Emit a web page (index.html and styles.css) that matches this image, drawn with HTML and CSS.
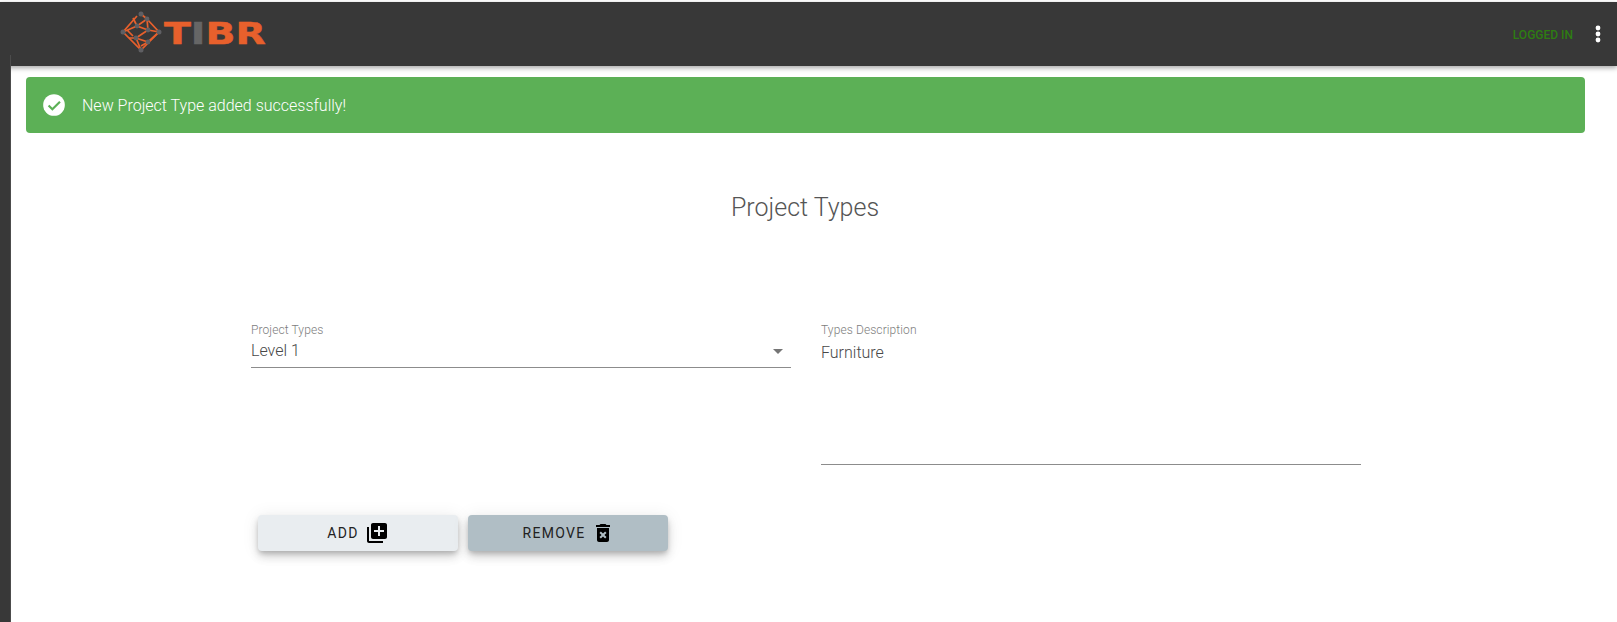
FILE: index.html
```html
<!DOCTYPE html>
<html lang="en">
<head>
<meta charset="utf-8">
<title>Project Types</title>
<link rel="stylesheet" href="styles.css">
</head>
<body>
<header class="topbar">
  <div class="brand">
    <svg class="brand-mark" viewBox="0 0 44 44" width="44" height="44" aria-hidden="true">
      <g fill="none" stroke="#e8602c" stroke-width="1.7">
        <path d="M18 6 L4 22 L22 40 L40 22 L28 9"/>
        <path d="M18 16 L28 9 L29 20 L17 28 L29 32 L40 22 L29 20"/>
        <path d="M14 8 L18 16 L29 20 M4 22 L18 16 M22 4 L28 9 M17 28 L10 28 M17 28 L22 40 M29 32 L22 36 M14 26 L8 20"/>
      </g>
      <g fill="#5f5f63">
        <circle cx="22" cy="4" r="2.5"/><circle cx="40" cy="22" r="2.5"/><circle cx="22" cy="40" r="2.5"/><circle cx="4" cy="22" r="2.5"/>
        <circle cx="28" cy="9" r="2.4"/><circle cx="18" cy="16" r="2.4"/><circle cx="29" cy="20" r="2.4"/><circle cx="17" cy="28" r="2.4"/><circle cx="29" cy="32" r="2.400"/>
      </g>
    </svg>
    <div class="wordmark"><span>T</span><span class="wordmark-i">I</span><span>BR</span></div>
  </div>
  <div class="session">
    <span class="session-label">LOGGED IN</span>
    <svg class="more" viewBox="0 0 6 18" width="6" height="18" aria-hidden="true"><circle cx="3" cy="3" r="2.400"/><circle cx="3" cy="9" r="2.400"/><circle cx="3" cy="15" r="2.400"/></svg>
  </div>
</header>
<div class="shell">
  <aside class="rail"></aside>
  <main class="content">
    <div class="alert">
      <svg class="alert-icon" viewBox="0 0 24 24" width="26" height="26" aria-hidden="true"><path fill="#fff" d="M12 2a10 10 0 1 0 0 20 10 10 0 0 0 0-20z"/><path fill="none" stroke="#5cb056" stroke-width="2" d="M7 12.500l3.500 3.500L17.500 9"/></svg>
      <span>New Project Type added successfully!</span>
    </div>
    <h1 class="title">Project Types</h1>
    <div class="form">
      <div class="field field-select">
        <label>Project Types</label>
        <div class="value">Level 1</div>
        <svg class="caret" viewBox="0 0 10 5" width="10" height="5" aria-hidden="true"><path d="M0 0h10L5 5z"/></svg>
      </div>
      <div class="field field-text">
        <label>Types Description</label>
        <div class="value">Furniture</div>
      </div>
    </div>
    <div class="actions">
      <button class="btn btn-light" type="button">ADD
        <svg viewBox="0 0 24 24" width="24" height="24" aria-hidden="true"><path d="M4 6H2v14c0 1.100.9 2 2 2h14v-2H4V6zm16-4H8c-1.100 0-2 .9-2 2v12c0 1.100.9 2 2 2h12c1.100 0 2-.9 2-2V4c0-1.100-.9-2-2-2zm-1 9h-4v4h-2v-4H9V9h4V5h2v4h4v2z"/></svg>
      </button>
      <button class="btn btn-dark" type="button">REMOVE
        <svg viewBox="0 0 24 24" width="24" height="24" aria-hidden="true"><path d="M6 19c0 1.100.9 2 2 2h8c1.100 0 2-.9 2-2V7H6v12zm2.460-7.120l1.410-1.410L12 12.590l2.120-2.120 1.410 1.410L13.410 14l2.120 2.120-1.410 1.410L12 15.410l-2.120 2.120-1.410-1.410L10.590 14l-2.130-2.120zM15.500 4l-1-1h-5l-1 1H5v2h14V4z"/></svg>
      </button>
    </div>
  </main>
</div>
</body>
</html>
```
FILE: styles.css
```css
* { box-sizing: border-box; }
html, body { margin: 0; height: 622px; overflow: hidden; background: #fff; }
body { font-family: Roboto, "Liberation Sans", sans-serif; color: #333; padding-top: 2px; }
.topbar {
  position: relative; z-index: 2;
  height: 64px; background: #383838;
  box-shadow: 0 2px 5px rgba(0,0,0,.35);
  display: flex; align-items: center; justify-content: space-between;
  padding: 0 16px 0 119px;
}
.brand { display: flex; align-items: center; gap: 1px; margin-top: -4px; }
.brand-mark { display: block; }
.wordmark {
  display: flex; font-family: "DejaVu Sans", sans-serif; font-weight: 700;
  font-size: 30px; line-height: 30px; color: #e8602c; -webkit-text-stroke: .5px #e8602c;
  transform: translateY(2px) scaleX(1.31); transform-origin: left;
}
.wordmark-i { color: #666; -webkit-text-stroke: .5px #666; }
.session { display: flex; align-items: center; gap: 22px; }
.session-label { font-size: 12px; font-weight: 500; color: #2e7d12; margin-top: 1px; }
.more { fill: #fff; display: block; }
.shell { display: flex; height: 556px; }
.rail { position: relative; z-index: 3; width: 11px; margin-top: -11px; background: #383838; border-right: 1px solid #4c4c4c; flex: none; }
.content { flex: 1; padding: 11px 16px 0 15px; }
.alert {
  width: 1559px; height: 56px; background: #5cb056; border-radius: 4px;
  display: flex; align-items: center; gap: 15px; padding: 0 15px;
  color: #fff; font-size: 16px; font-weight: 300;
}
.title { margin: 59px 0 0; font-size: 25px; line-height: 32px; font-weight: 300; text-align: center; color: #555; padding-right: 17px; }
.form { display: flex; gap: 30px; margin: 99px 0 0 225px; align-items: flex-start; }
.field { position: relative; width: 540px; border-bottom: 1px solid #8c8c8c; }
.field label { display: block; font-size: 12px; line-height: 14px; font-weight: 300; color: #7d7d7d; letter-spacing: .1px; }
.value { font-size: 16px; line-height: 22px; font-weight: 300; color: #484848; }
.field-select { height: 45px; }
.field-select .value { margin-top: 3px; }
.field-text { height: 142px; }
.field-text .value { margin-top: 5px; }
.caret { position: absolute; right: 8px; top: 26px; fill: #757575; }
.actions { display: flex; gap: 10px; margin: 50px 0 0 232px; }
.btn {
  width: 200px; height: 36px; border: 0; border-radius: 4px;
  display: flex; align-items: center; justify-content: center; gap: 6px;
  font-family: Roboto, sans-serif; font-size: 14px; font-weight: 400; letter-spacing: 1.3px; color: #222;
  box-shadow: 0 3px 5px -1px rgba(0,0,0,.2), 0 6px 10px 0 rgba(0,0,0,.14), 0 1px 18px 0 rgba(0,0,0,.08);
}
.btn svg { display: block; fill: #000; }
.btn-light { background: #e9edf0; }
.btn-dark { background: #b0bec5; padding-left: 8px; }
```
